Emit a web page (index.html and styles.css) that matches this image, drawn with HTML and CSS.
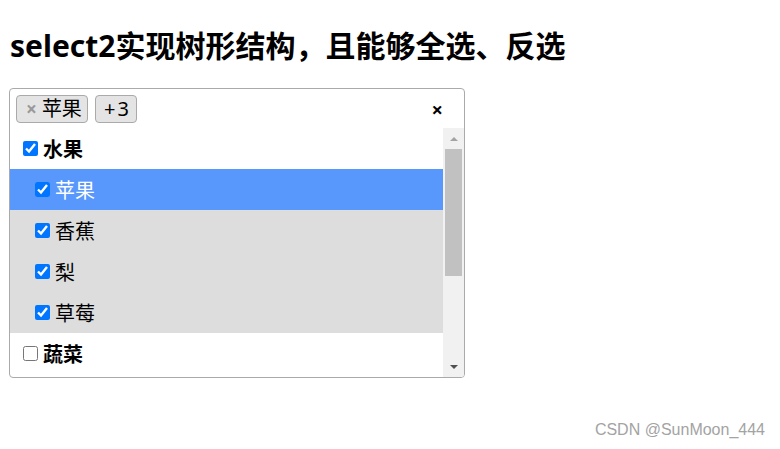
FILE: index.html
```html
<!DOCTYPE html>
<html lang="zh">
<head>
<meta charset="utf-8">
<link rel="stylesheet" href="styles.css">
</head>
<body>
<h2 class="title">select2实现树形结构，且能够全选、反选</h2>
<div class="select">
  <div class="selection">
    <span class="tag"><span class="tag-x">×</span>苹果</span>
    <span class="tag tag-more">+ 3</span>
    <span class="clear">×</span>
  </div>
  <div class="dropdown">
    <ul class="options">
      <li class="opt group"><input type="checkbox" checked><span>水果</span></li>
      <li class="opt child hl"><input type="checkbox" checked><span>苹果</span></li>
      <li class="opt child sel"><input type="checkbox" checked><span>香蕉</span></li>
      <li class="opt child sel"><input type="checkbox" checked><span>梨</span></li>
      <li class="opt child sel"><input type="checkbox" checked><span>草莓</span></li>
      <li class="opt group"><input type="checkbox"><span>蔬菜</span></li>
    </ul>
    <div class="scrollbar">
      <div class="sb-btn"><span class="arrow-up"></span></div>
      <div class="sb-thumb"></div>
      <div class="sb-space"></div>
      <div class="sb-btn"><span class="arrow-down"></span></div>
    </div>
  </div>
</div>
<div class="watermark">CSDN @SunMoon_444</div>
</body>
</html>
```
FILE: styles.css
```css
html, body {
  margin: 0;
  padding: 0;
  background: #fff;
}
body {
  padding: 0 9px;
  font-family: "Noto Sans", "Noto Sans CJK SC", sans-serif;
  color: #000;
}
.title {
  margin: 24px 0 0 1px;
  height: 64px;
  line-height: 44px;
  font-size: 30px;
  font-weight: bold;
  letter-spacing: 0;
}
.select {
  width: 456px;
  height: 290px;
  box-sizing: border-box;
  border: 1px solid #aaa;
  border-radius: 4px;
  display: flex;
  flex-direction: column;
  overflow: hidden;
}
.selection {
  height: 39px;
  flex: none;
  box-sizing: border-box;
  padding: 6px 0 0 6px;
  display: flex;
  align-items: flex-start;
  gap: 7px;
}
.tag {
  height: 28px;
  box-sizing: border-box;
  border: 1px solid #aaa;
  border-radius: 4px;
  background: #e4e4e4;
  padding: 0 5px 0 9px;
  display: flex;
  align-items: center;
  font-size: 20px;
  line-height: 26px;
}
.tag-more {
  padding: 0 7px 0 8px;
  word-spacing: -3px;
}
.tag-x {
  color: #999;
  font-weight: bold;
  margin-right: 5px;
  font-size: 19px;
}
.clear {
  margin-left: auto;
  margin-right: 21px;
  margin-top: 2px;
  font-weight: bold;
  font-size: 20px;
  line-height: 26px;
}
.dropdown {
  flex: 1;
  display: flex;
  min-height: 0;
}
.options {
  list-style: none;
  margin: 0;
  padding: 0;
  flex: 1;
  overflow: hidden;
}
.opt {
  height: 41px;
  display: flex;
  align-items: center;
  font-size: 20px;
}
.opt input {
  width: 15px;
  height: 15px;
  margin: 0 5px 0 0;
}
.group {
  padding-left: 13px;
  font-weight: bold;
}
.child {
  padding-left: 25px;
}
.sel {
  background: #ddd;
}
.hl {
  background: #5897fb;
  color: #fff;
}
.scrollbar {
  width: 21px;
  flex: none;
  background: #f1f1f1;
  display: flex;
  flex-direction: column;
}
.sb-btn {
  height: 21px;
  display: flex;
  align-items: center;
  justify-content: center;
}
.sb-thumb {
  height: 127px;
  margin: 0 2px;
  background: #c1c1c1;
}
.sb-space {
  flex: 1;
}
.arrow-up {
  width: 0;
  height: 0;
  border-left: 4px solid transparent;
  border-right: 4px solid transparent;
  border-bottom: 4px solid #a3a3a3;
}
.arrow-down {
  width: 0;
  height: 0;
  border-left: 4px solid transparent;
  border-right: 4px solid transparent;
  border-top: 4px solid #505050;
}
.watermark {
  text-align: right;
  margin: 43px 6px 0 0;
  font-family: "Liberation Sans", Arial, sans-serif;
  font-size: 16px;
  color: #a3a3a3;
}
```
